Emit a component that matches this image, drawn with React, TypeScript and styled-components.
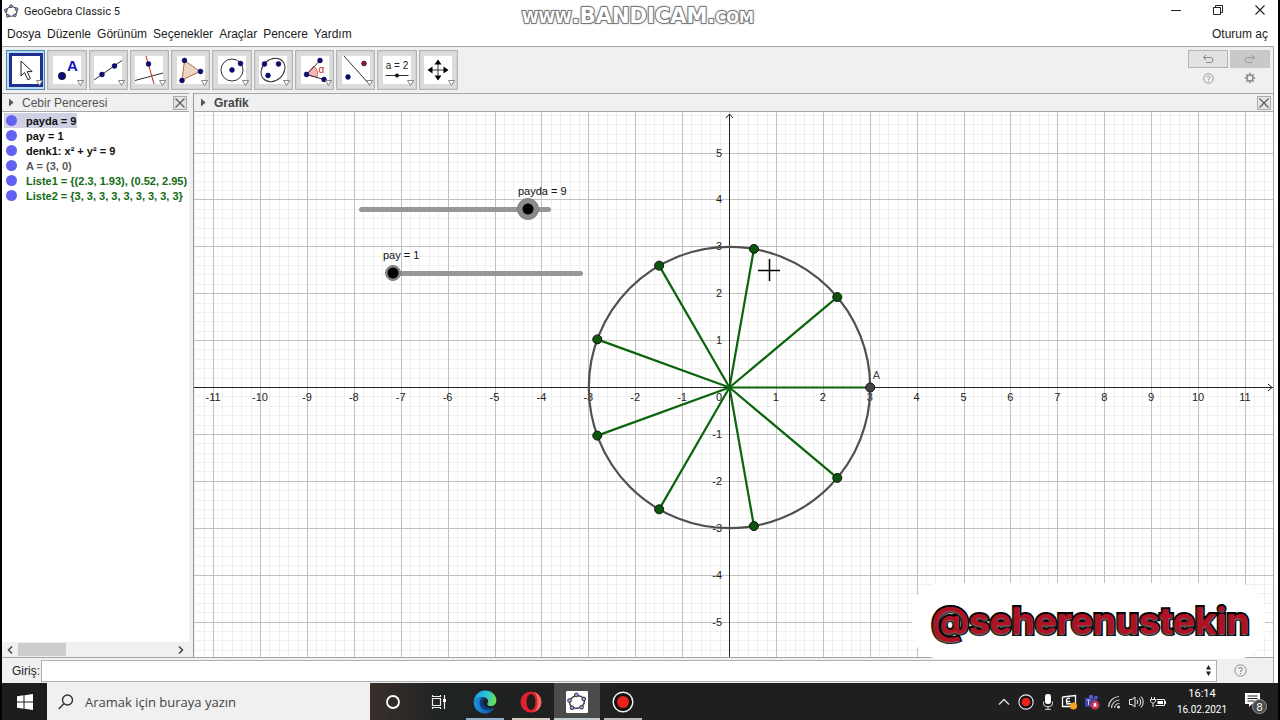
import React, { useEffect, useState } from "react";
import styled, { createGlobalStyle } from "styled-components";

const GlobalStyle = createGlobalStyle`
  *, *::before, *::after { box-sizing: border-box; }
  html, body { margin: 0; padding: 0; }
  body {
    background: #000;
    font-family: "Liberation Sans", Arial, sans-serif;
    font-size: 12px;
    color: #222;
  }
  button { font: inherit; color: inherit; padding: 0; cursor: default; }
`;

const Desktop = styled.div`
  display: flex;
  flex-direction: column;
  min-height: 100vh;
  border: solid #000;
  border-width: 0 2px;
  background: #fff;
`;

/* ---------- title and menu ---------- */

const TitleBar = styled.header`
  position: relative;
  display: flex;
  align-items: center;
  height: 22px;
  padding: 0 10px 0 2px;
  background: #fff;
`;

const AppTitle = styled.h1`
  flex: 1;
  margin: 0 0 0 5px;
  font: 400 11px Roboto, "Noto Sans", sans-serif;
  color: #222;
`;

const WindowControls = styled.div`
  display: flex;
  gap: 26px;
  padding-bottom: 3px;
`;

const PlainButton = styled.button`
  display: grid;
  place-items: center;
  border: 0;
  background: none;
`;

const WindowButton = styled(PlainButton)`
  width: 16px;
  height: 16px;
`;

const Watermark = styled.div`
  position: absolute;
  left: 0;
  right: 4px;
  top: 4px;
  text-align: center;
  pointer-events: none;
  font: 700 21px/24px "DejaVu Sans", sans-serif;
  font-variant: small-caps;
  color: #fff;
  -webkit-text-stroke: 2px #808080;
  paint-order: stroke fill;
  text-shadow: 0 0 3px #666;
`;

const MenuBar = styled.nav`
  display: flex;
  align-items: center;
  gap: 6px;
  height: 24px;
  padding: 0 10px 0 5px;
`;

const MenuButton = styled.button<{ $end?: boolean }>`
  border: 0;
  background: none;
  margin-left: ${(p) => (p.$end ? "auto" : "0")};
`;

/* ---------- window body ---------- */

const WindowBody = styled.div`
  flex: 1;
  display: flex;
  flex-direction: column;
  margin-right: 4px;
  border: solid #a6a6a6;
  border-width: 1px 1px 0 0;
  background: #f0f0f0;
`;

const Toolbar = styled.div`
  display: flex;
  justify-content: space-between;
  height: 46px;
  padding: 3px 3px 0 4px;
`;

const ToolGroup = styled.div`
  display: grid;
  grid-template-columns: repeat(11, 1fr);
  gap: 2px;
  width: 452px;
  height: 40px;
`;

const ToolButton = styled.button<{ $active?: boolean }>`
  display: grid;
  place-items: center;
  border: 1px solid ${(p) => (p.$active ? "#4a86b8" : "#b4b4b4")};
  background: ${(p) => (p.$active ? "#b9dcf5" : "#dcdcdc")};
  box-shadow: inset 0 0 0 1px ${(p) => (p.$active ? "#b9dcf5" : "#d2d2d2")};
`;

const ToolFace = styled.svg<{ $active?: boolean }>`
  display: block;
  width: 34px;
  height: 34px;
  border: ${(p) => (p.$active ? "3px solid #1f2f8f" : "3px solid #dcdcdc")};
  background: #fff;
  overflow: visible;
`;

const Actions = styled.div`
  display: grid;
  grid-template-columns: 40px 40px;
  grid-template-rows: 18px 20px;
  column-gap: 2px;
`;

const HistoryButton = styled.button<{ $disabled?: boolean }>`
  display: grid;
  place-items: center;
  border: 1px solid ${(p) => (p.$disabled ? "#c8c8c8" : "#b4b4b4")};
  background: ${(p) => (p.$disabled ? "#c9c9c9" : "#e2e2e2")};
`;

const Views = styled.div`
  flex: 1;
  display: flex;
`;

const AlgebraPane = styled.section`
  display: flex;
  flex-direction: column;
  width: 187px;
`;

const GraphPane = styled.section`
  flex: 1;
  display: flex;
  flex-direction: column;
  margin-left: 4px;
  border-left: 1px solid #999;
  min-width: 0;
`;

const PaneHeader = styled.div`
  display: flex;
  align-items: center;
  gap: 8px;
  height: 19px;
  padding: 0 2px 0 6px;
  border: solid #a6a6a6;
  border-width: 1px 0;
`;

const PaneTitle = styled.h2<{ $bold?: boolean }>`
  flex: 1;
  margin: 0;
  font-size: 12px;
  font-weight: ${(p) => (p.$bold ? 700 : 400)};
  color: ${(p) => (p.$bold ? "#444" : "#555")};
`;

const CloseBox = styled.button`
  display: grid;
  place-items: center;
  width: 14px;
  height: 14px;
  border: 1px solid #aaa;
  background: #e4e4e4;
`;

const ObjectList = styled.ul`
  flex: 1;
  margin: 0;
  padding: 1px 0;
  list-style: none;
  background: #fff;
`;

const ObjectRow = styled.li`
  display: flex;
  height: 15px;
  padding-left: 2px;
`;

const ObjectLabel = styled.span<{ $color: string; $selected?: boolean }>`
  display: flex;
  align-items: center;
  gap: 9px;
  padding: 0 1px 0 2px;
  white-space: nowrap;
  font-size: 11px;
  font-weight: 700;
  color: ${(p) => p.$color};
  background: ${(p) => (p.$selected ? "#d0d0e4" : "transparent")};
`;

const Marble = styled.span`
  width: 11px;
  height: 11px;
  border-radius: 50%;
  background: #6262f2;
`;

const ScrollRow = styled.div`
  display: flex;
  align-items: center;
  height: 15px;
  background: #f0f0f0;
`;

const ScrollTrack = styled.div`
  flex: 1;
  height: 13px;
`;

const ScrollThumb = styled.div`
  width: 48px;
  height: 13px;
  background: #cdcdcd;
`;

const ScrollArrow = styled(PlainButton)`
  width: 16px;
  height: 15px;
`;

/* ---------- drawing pad ---------- */

const Pad = styled.div`
  flex: 1;
  position: relative;
  background: #fff;
`;

const Plot = styled.svg`
  position: absolute;
  inset: 0;
  width: 100%;
  height: 100%;
  font-family: "Liberation Sans", Arial, sans-serif;
`;

const SliderBox = styled.div<{ $x: number; $y: number; $r: number }>`
  position: absolute;
  left: ${(p) => p.$x - p.$r}px;
  top: ${(p) => p.$y - 11}px;
  width: ${(p) => 188 + p.$r * 2}px;
  height: 22px;

  &::before {
    content: "";
    position: absolute;
    left: ${(p) => p.$r - 2}px;
    right: ${(p) => p.$r - 2}px;
    top: 9px;
    height: 5px;
    border-radius: 3px;
    background: #979797;
  }
`;

const SliderLabel = styled.label<{ $left: number; $top: number }>`
  position: absolute;
  left: ${(p) => p.$left}px;
  top: ${(p) => p.$top}px;
  font-size: 11px;
  line-height: 14px;
  white-space: nowrap;
  color: #111;
`;

const Range = styled.input<{ $r: number }>`
  position: relative;
  display: block;
  width: 100%;
  height: 22px;
  margin: 0;
  appearance: none;
  background: none;

  &::-webkit-slider-thumb {
    appearance: none;
    width: ${(p) => p.$r * 2}px;
    height: ${(p) => p.$r * 2}px;
    border: 1px solid #777;
    border-radius: 50%;
    background: radial-gradient(circle, #000 5px, #8c8c8c 6px);
  }
`;

const HandleTag = styled.div`
  position: absolute;
  right: 8px;
  bottom: -2px;
  width: 353px;
  padding: 18px 0 18px 4px;
  border-radius: 28px;
  background: #fff;
  text-align: center;
  font: 700 37px/40px Inter, "Open Sans", sans-serif;
  color: #b01224;
  -webkit-text-stroke: 4px #000;
  paint-order: stroke fill;
  text-shadow: 0 1px 2px #888;
`;

/* ---------- input bar ---------- */

const InputBar = styled.form`
  display: flex;
  align-items: center;
  height: 26px;
  padding: 1px 26px 1px 10px;
  border-top: 1px solid #a6a6a6;
  background: #f0f0f0;
`;

const InputLabel = styled.label`
  width: 29px;
`;

const InputFrame = styled.div`
  flex: 1;
  display: flex;
  align-items: center;
  height: 22px;
  margin-right: 17px;
  padding-right: 4px;
  border: 1px solid #b0b0b0;
  background: #fff;
`;

const CommandInput = styled.input`
  flex: 1;
  min-width: 0;
  height: 18px;
  border: 0;
  outline: 0;
  background: none;
  font: 12px "Liberation Sans", Arial, sans-serif;
`;

/* ---------- taskbar ---------- */

const Taskbar = styled.footer`
  display: flex;
  height: 37px;
  background: linear-gradient(90deg, #1b1e1d 366px, #3a302c 367px, #1f2322 440px, #1f1f1f 640px);
  color: #fff;
`;

const StartButton = styled(PlainButton)`
  width: 45px;
`;

const SearchBox = styled.label`
  display: flex;
  align-items: center;
  gap: 9px;
  width: 323px;
  padding-left: 11px;
  background: #f0f0f0;
`;

const SearchInput = styled.input`
  flex: 1;
  min-width: 0;
  border: 0;
  outline: 0;
  background: none;
  font: 13px "Open Sans", "Noto Sans", sans-serif;
  &::placeholder { color: #444; opacity: 1; }
`;

const TaskButton = styled.button<{ $line?: string; $active?: boolean }>`
  display: grid;
  place-items: center;
  width: 46px;
  border: 0;
  background-color: ${(p) => (p.$active ? "#4b4b4b" : "transparent")};
  background-image: ${(p) => (p.$line ? `linear-gradient(${p.$line}, ${p.$line})` : "none")};
  background-repeat: no-repeat;
  background-position: center bottom;
  background-size: ${(p) => (p.$active ? "46px" : "38px")} 2px;
`;

const Tray = styled.div`
  display: flex;
  align-items: center;
  margin-left: auto;
`;

const TrayButton = styled(PlainButton)`
  width: 22px;
  height: 36px;
`;

const Clock = styled.time`
  width: 64px;
  margin-left: 1px;
  text-align: center;
  font: 10px/16px Roboto, sans-serif;
  span { display: block; }
  span:first-child { font-size: 11px; }
`;

const NoticeButton = styled(PlainButton)`
  width: 44px;
  height: 36px;
`;

/* ---------- icons ---------- */

const Corner = () => (
  <path d="M24.500 24.500h6l-3 5z" fill="#fff" stroke="#777" strokeWidth="0.9" />
);

const Dot = ({ x, y, c = "#0b0b7a" }: { x: number; y: number; c?: string }) => (
  <circle cx={x} cy={y} r="2.4" fill={c} stroke="#000040" strokeWidth="0.6" />
);

const tools: { name: string; art: React.ReactNode }[] = [
  {
    name: "Taşı",
    art: <path d="M9 5v15l3.6-3.400 3.200 7.200 2.600-1.200-3.200-7h5z" fill="#fff" stroke="#222" />,
  },
  {
    name: "Nokta",
    art: (
      <>
        <circle cx="9" cy="20" r="3.7" fill="#0b0b7a" stroke="#000" strokeWidth="0.6" />
        <text x="14" y="15" fontSize="15" fontWeight="700" fill="#1414b8" fontFamily="Liberation Sans">A</text>
      </>
    ),
  },
  {
    name: "Doğru",
    art: (
      <>
        <path d="M0 24L28 4.500" stroke="#333" />
        <Dot x={8} y={18.500} />
        <Dot x={20.500} y={10} />
      </>
    ),
  },
  {
    name: "Dik doğru",
    art: (
      <>
        <path d="M0 24.500L28 17" stroke="#333" />
        <path d="M11 0l8 28" stroke="#cc2222" />
        <Dot x={13.500} y={8} />
      </>
    ),
  },
  {
    name: "Çokgen",
    art: (
      <>
        <path d="M7.500 4.500L23 15.500 5 24z" fill="#edd5c5" stroke="#b06a4a" />
        <Dot x={7.500} y={4.500} />
        <Dot x={23.500} y={15.500} />
        <Dot x={5} y={24.500} />
      </>
    ),
  },
  {
    name: "Çember",
    art: (
      <>
        <circle cx="14" cy="14" r="11" fill="none" stroke="#333" />
        <Dot x={14} y={14} />
        <Dot x={22.500} y={7.500} />
      </>
    ),
  },
  {
    name: "Elips",
    art: (
      <>
        <ellipse cx="14" cy="14" rx="13" ry="10.500" transform="rotate(-42 14 14)" fill="none" stroke="#333" />
        <Dot x={5.500} y={8} />
        <Dot x={19.500} y={8} />
        <Dot x={9} y={19.500} />
      </>
    ),
  },
  {
    name: "Açı",
    art: (
      <>
        <path d="M5.500 18.500L13 10a11 11 0 0 1 3 11.500z" fill="#f5b5b0" stroke="#cc4444" strokeWidth="0.7" />
        <path d="M19 4.500L5.500 18.500 23 23.500" fill="none" stroke="#333" />
        <text x="17.500" y="17" fontSize="10" fill="#cc2222" fontFamily="Liberation Sans">α</text>
        <Dot x={19} y={4.500} />
        <Dot x={5.500} y={18.500} />
        <Dot x={23} y={23.500} />
      </>
    ),
  },
  {
    name: "Yansıt",
    art: (
      <>
        <path d="M2 0l25 28" stroke="#333" />
        <Dot x={22} y={7.500} c="#a01822" />
        <Dot x={6} y={21} />
      </>
    ),
  },
  {
    name: "Sürgü",
    art: (
      <>
        <text x="14" y="13" fontSize="10" textAnchor="middle" fill="#222" fontFamily="Liberation Sans">a = 2</text>
        <path d="M2.500 19.500h23" stroke="#333" />
        <circle cx="14" cy="19.500" r="2" fill="#111" />
      </>
    ),
  },
  {
    name: "Grafik penceresini taşı",
    art: (
      <>
        <path d="M14 7v14M7 14h14" stroke="#333" />
        <path d="M14 3.500l3.500 5h-7zM14 24.500l3.500-5h-7zM3.500 14l5-3.500v7zM24.500 14l-5-3.500v7z" fill="#000" />
      </>
    ),
  },
];

const GeoMark = ({ size }: { size: number }) => (
  <svg width={size} height={size} viewBox="0 0 16 16">
    <ellipse cx="8" cy="8" rx="6" ry="5" fill="none" stroke="#444" strokeWidth="1.200" transform="rotate(-15 8 8)" />
    {[[7.5, 2.3], [13.4, 5.6], [11.6, 12.2], [4, 12.6], [2, 6.8]].map(([x, y]) => (
      <circle key={x} cx={x} cy={y} r="1.5" fill="#9c9cf0" stroke="#333" strokeWidth="0.8" />
    ))}
  </svg>
);

const Cross = ({ size, color = "#222" }: { size: number; color?: string }) => (
  <svg width={size} height={size} viewBox="0 0 10 10">
    <path d="M0.500 0.500l9 9M9.500 0.500l-9 9" stroke={color} strokeWidth="1.100" />
  </svg>
);

const Disclosure = () => (
  <svg width="6" height="9" viewBox="0 0 6 9">
    <path d="M1 0.500l4.500 4-4.500 4z" fill="#555" />
  </svg>
);

const HelpIcon = ({ size }: { size: number }) => (
  <svg width={size} height={size} viewBox="0 0 12 12">
    <circle cx="6" cy="6" r="5.200" fill="none" stroke="#888" strokeWidth="0.9" />
    <path d="M4.400 4.700a1.600 1.500 0 1 1 2.500 1.300c-.7.500-.9.700-.9 1.400M6 8.300v1" fill="none" stroke="#888" />
  </svg>
);

const GearIcon = () => (
  <svg width="12" height="12" viewBox="0 0 12 12">
    <circle cx="6" cy="6" r="3" fill="none" stroke="#888" strokeWidth="1.400" />
    {[0, 45, 90, 135, 180, 225, 270, 315].map((a) => (
      <path key={a} d="M6 2.500V.8" stroke="#888" strokeWidth="1.600" transform={`rotate(${a} 6 6)`} />
    ))}
  </svg>
);

const RecordIcon = ({ size }: { size: number }) => (
  <svg width={size} height={size} viewBox="0 0 22 22">
    <circle cx="11" cy="11" r="9.800" fill="#111" stroke="#eee" strokeWidth="1.500" />
    <circle cx="11" cy="11" r="6" fill="#e8231c" />
  </svg>
);

/* ---------- plot data ---------- */

const UNIT = 46.9;
const OX = 535;
const OY = 275;
const sx = (x: number) => OX + x * UNIT;
const sy = (y: number) => OY - y * UNIT;
const crisp = (v: number) => Math.round(v) + 0.5;

const span = (from: number, to: number) =>
  Array.from({ length: Math.max(0, to - from + 1) }, (_, i) => from + i);

const SLICES = 9;
const spokes = span(0, SLICES - 1).map((i) => {
  const t = (2 * Math.PI * i) / SLICES;
  return { x: sx(3 * Math.cos(t)) + 0.5, y: sy(3 * Math.sin(t)) + 0.5 };
});

const objects = [
  { text: "payda = 9", color: "#111", selected: true },
  { text: "pay = 1", color: "#111" },
  { text: "denk1: x² + y² = 9", color: "#111" },
  { text: "A = (3, 0)", color: "#5a5a5a" },
  { text: "Liste1 = {(2.3, 1.93), (0.52, 2.95)", color: "#136a13" },
  { text: "Liste2 = {3, 3, 3, 3, 3, 3, 3, 3, 3}", color: "#136a13" },
];

/* Last whole unit whose label fits right of and below the origin. */
const visibleUnits = () => ({
  right: Math.floor((window.innerWidth - 201 - OX - 10) / UNIT),
  down: Math.floor((window.innerHeight - 175 - OY - 8) / UNIT),
});

const Graph = () => {
  const [units, setUnits] = useState(visibleUnits);
  useEffect(() => {
    const update = () => setUnits(visibleUnits());
    window.addEventListener("resize", update);
    return () => window.removeEventListener("resize", update);
  }, []);
  const { right, down } = units;

  return (
    <Plot aria-label="Grafik">
      <g shapeRendering="crispEdges">
        {span(-57, right * 5 + 5).map((i) => (
          <line key={`mx${i}`} x1={crisp(sx(i / 5))} x2={crisp(sx(i / 5))} y1="0" y2="100%" stroke="#f0f0f0" />
        ))}
        {span(-down * 5 - 5, 29).map((i) => (
          <line key={`my${i}`} y1={crisp(sy(i / 5))} y2={crisp(sy(i / 5))} x1="0" x2="100%" stroke="#f0f0f0" />
        ))}
        {span(-11, right + 1).map((i) => (
          <line key={`x${i}`} x1={crisp(sx(i))} x2={crisp(sx(i))} y1="0" y2="100%" stroke="#c0c0c0" />
        ))}
        {span(-down - 1, 5).map((i) => (
          <line key={`y${i}`} y1={crisp(sy(i))} y2={crisp(sy(i))} x1="0" x2="100%" stroke="#c0c0c0" />
        ))}
        <line x1="0" x2="100%" y1={crisp(OY)} y2={crisp(OY)} stroke="#222" />
        <line y1="2" y2="100%" x1={crisp(OX)} x2={crisp(OX)} stroke="#222" />
      </g>
      <path d={`M${OX - 3} 6l3.500-4 3.500 4`} fill="none" stroke="#222" />
      <svg x="100%" y={OY} overflow="visible">
        <path d="M-5 -3l4 3.500-4 3.500" fill="none" stroke="#222" />
      </svg>
      <g fontSize="11" fill="#222">
        {span(-11, right).filter((i) => i !== 0).map((i) => (
          <text key={`lx${i}`} x={sx(i)} y={OY + 14} textAnchor="middle">{i}</text>
        ))}
        {span(-down, 5).filter((i) => i !== 0).map((i) => (
          <text key={`ly${i}`} x={OX - 7} y={sy(i) + 4} textAnchor="end">{i}</text>
        ))}
        <text x={OX - 7} y={OY + 14} textAnchor="end">0</text>
      </g>
      <circle cx={OX + 0.5} cy={OY + 0.5} r={3 * UNIT} fill="none" stroke="#505050" strokeWidth="2.200" />
      {spokes.map((p, i) => (
        <line key={i} x1={OX + 0.5} y1={OY + 0.5} x2={p.x} y2={p.y} stroke="#0b640b" strokeWidth="2.200" />
      ))}
      {spokes.map((p, i) => (
        <circle key={i} cx={p.x} cy={p.y} r="4.500" fill={i ? "#0b560b" : "#444"} stroke="#111" />
      ))}
      <text x={sx(3) + 3} y={OY - 8} fontSize="11" fill="#444">A</text>
      <path d="M564 158.500h22M575.500 147v22" stroke="#000" strokeWidth="1.500" />
    </Plot>
  );
};

export default function App() {
  return (
    <>
      <GlobalStyle />
      <Desktop>
        <TitleBar>
          <GeoMark size={15} />
          <AppTitle>GeoGebra Classic 5</AppTitle>
          <Watermark>www.BANDICAM.com</Watermark>
          <WindowControls>
            <WindowButton aria-label="Küçült">
              <svg width="16" height="16"><path d="M3 8.500h10" stroke="#222" /></svg>
            </WindowButton>
            <WindowButton aria-label="Geri yükle">
              <svg width="16" height="16">
                <path d="M3.500 5.500h7v7h-7zM5.500 5.500v-2h7v7h-2" fill="none" stroke="#222" />
              </svg>
            </WindowButton>
            <WindowButton aria-label="Kapat"><Cross size={10} /></WindowButton>
          </WindowControls>
        </TitleBar>
        <MenuBar>
          {["Dosya", "Düzenle", "Görünüm", "Seçenekler", "Araçlar", "Pencere", "Yardım"].map((m) => (
            <MenuButton key={m}>{m}</MenuButton>
          ))}
          <MenuButton $end>Oturum aç</MenuButton>
        </MenuBar>

        <WindowBody>
          <Toolbar>
            <ToolGroup>
              {tools.map((t, i) => (
                <ToolButton key={t.name} aria-label={t.name} $active={i === 0}>
                  <ToolFace viewBox="0 0 28 28" fill="none" $active={i === 0}>
                    {t.art}
                    <Corner />
                  </ToolFace>
                </ToolButton>
              ))}
            </ToolGroup>
            <Actions>
              <HistoryButton aria-label="Geri al">
                <svg width="12" height="10" fill="none" stroke="#888">
                  <path d="M1.500 3.500h7a2.500 2.500 0 0 1 0 5H4M4 1L1.500 3.500 4 6" />
                </svg>
              </HistoryButton>
              <HistoryButton aria-label="Yinele" $disabled>
                <svg width="12" height="10" fill="none" stroke="#999">
                  <path d="M10.500 3.500h-7a2.500 2.500 0 0 0 0 5H8M8 1l2.500 2.500L8 6" />
                </svg>
              </HistoryButton>
              <PlainButton aria-label="Yardım"><HelpIcon size={11} /></PlainButton>
              <PlainButton aria-label="Ayarlar"><GearIcon /></PlainButton>
            </Actions>
          </Toolbar>

          <Views>
            <AlgebraPane>
              <PaneHeader>
                <Disclosure />
                <PaneTitle>Cebir Penceresi</PaneTitle>
                <CloseBox aria-label="Cebir penceresini kapat"><Cross size={10} color="#555" /></CloseBox>
              </PaneHeader>
              <ObjectList>
                {objects.map((o) => (
                  <ObjectRow key={o.text}>
                    <ObjectLabel $color={o.color} $selected={o.selected}>
                      <Marble />
                      {o.text}
                    </ObjectLabel>
                  </ObjectRow>
                ))}
              </ObjectList>
              <ScrollRow>
                <ScrollArrow aria-label="Sola kaydır">
                  <svg width="6" height="8"><path d="M5 .5L1.500 4 5 7.500" fill="none" stroke="#444" strokeWidth="1.500" /></svg>
                </ScrollArrow>
                <ScrollTrack><ScrollThumb /></ScrollTrack>
                <ScrollArrow aria-label="Sağa kaydır">
                  <svg width="6" height="8"><path d="M1 .5L4.500 4 1 7.500" fill="none" stroke="#444" strokeWidth="1.500" /></svg>
                </ScrollArrow>
              </ScrollRow>
            </AlgebraPane>

            <GraphPane>
              <PaneHeader>
                <Disclosure />
                <PaneTitle $bold>Grafik</PaneTitle>
                <CloseBox aria-label="Grafiği kapat"><Cross size={10} color="#555" /></CloseBox>
              </PaneHeader>
              <Pad>
                <Graph />
                <SliderLabel htmlFor="payda" $left={324} $top={72}>payda = 9</SliderLabel>
                <SliderBox $x={167} $y={97} $r={11}>
                  <Range id="payda" type="range" min={1} max={10} defaultValue={9} $r={11} />
                </SliderBox>
                <SliderLabel htmlFor="pay" $left={189} $top={136}>pay = 1</SliderLabel>
                <SliderBox $x={199} $y={161} $r={8}>
                  <Range id="pay" type="range" min={1} max={10} defaultValue={1} $r={8} />
                </SliderBox>
                <HandleTag>@seherenustekin</HandleTag>
              </Pad>
            </GraphPane>
          </Views>

          <InputBar onSubmit={(e) => e.preventDefault()}>
            <InputLabel htmlFor="command">Giriş:</InputLabel>
            <InputFrame>
              <CommandInput id="command" />
              <PlainButton type="button" aria-label="Geçmiş">
                <svg width="7" height="12"><path d="M3.500 0L6 4.500H1zM3.500 11L6 6.500H1z" fill="#222" /></svg>
              </PlainButton>
            </InputFrame>
            <PlainButton type="button" aria-label="Giriş yardımı"><HelpIcon size={13} /></PlainButton>
          </InputBar>
        </WindowBody>

        <Taskbar>
          <StartButton aria-label="Başlat">
            <svg width="16" height="16" fill="#fff">
              <path d="M0 2.200L6.500 1.300v6.200H0zM7.500 1.200L16 0v7.500H7.500zM0 8.500h6.500v6.200L0 13.800zM7.500 8.500H16V16l-8.500-1.200z" />
            </svg>
          </StartButton>
          <SearchBox>
            <svg width="16" height="16" fill="none" stroke="#333" strokeWidth="1.400">
              <circle cx="9.500" cy="6" r="5" />
              <path d="M6 9.500L.8 15" />
            </svg>
            <SearchInput aria-label="Arama" placeholder="Aramak için buraya yazın" />
          </SearchBox>
          <TaskButton aria-label="Cortana">
            <svg width="16" height="16"><circle cx="8" cy="8" r="6" fill="none" stroke="#fff" strokeWidth="1.800" /></svg>
          </TaskButton>
          <TaskButton aria-label="Görev görünümü">
            <svg width="18" height="16" fill="none" stroke="#eee" strokeWidth="1.200">
              <path d="M2.500 4.500h8v7h-8zM2.500 1v1.500h8V1M2.500 15v-1.500h8V15M14.500 1v14" />
              <path d="M13 5h3v3h-3z" fill="#fff" stroke="none" />
            </svg>
          </TaskButton>
          <TaskButton aria-label="Edge" $line="#8fb0c6">
            <svg width="24" height="24" viewBox="0 0 24 24">
              <defs>
                <linearGradient id="edgeTop" x1="0" x2="1" y1="0.300" y2="0.500">
                  <stop offset="0" stopColor="#1c9be8" />
                  <stop offset="0.550" stopColor="#2cc3d6" />
                  <stop offset="1" stopColor="#6ae04a" />
                </linearGradient>
                <linearGradient id="edgeLow" x1="0" x2="1">
                  <stop offset="0" stopColor="#1f8fe0" />
                  <stop offset="1" stopColor="#0c4f9c" />
                </linearGradient>
              </defs>
              <path d="M.7 12A11.400 11.400 0 0 1 12 .6c7 0 11.400 5 11.400 9.800 0 3.600-2.600 5.600-5.400 5.600-2.700 0-3.700-1-3.700-1.800 0-.8.900-1.100.9-2.900 0-2-2-4-5-4C5.500 7.300 1.500 9 .7 12z" fill="url(#edgeTop)" />
              <path d="M.7 12c.8-3 4.500-4.700 9-4.700C7.500 8.700 6.800 11 6.800 13c0 4 3.500 7 7.500 7 3 0 5-1 7.200-2.300-2 3.700-5.700 5.800-9.500 5.800C5.500 23.500.5 18.500.7 12z" fill="url(#edgeLow)" />
              <path d="M9.700 7.300C7.500 8.700 6.800 11 6.800 13c0 4 3.500 7 7.500 7 3 0 5-1 7.200-2.300-5 1.300-11.500-.2-11.500-5.700 0-1.500.8-2.700 2-3.300z" fill="#0a3f86" />
            </svg>
          </TaskButton>
          <TaskButton aria-label="Opera" $line="#d8ccc4">
            <svg width="22" height="22" viewBox="0 0 22 22">
              <ellipse cx="11" cy="11" rx="10.500" ry="10.500" fill="#e0202c" />
              <path d="M13 .7a10.500 10.500 0 0 1 0 20.600c3-1 4.500-5 4.500-10.300S16 1.700 13 .7z" fill="#f26a62" />
              <ellipse cx="11" cy="11" rx="4.500" ry="8" fill="#201c1c" />
            </svg>
          </TaskButton>
          <TaskButton aria-label="GeoGebra" $line="#c4cdd2" $active>
            <svg width="22" height="22">
              <rect width="22" height="22" rx="1" fill="#fff" />
              <svg x="1" y="1" width="20" height="20"><GeoMark size={20} /></svg>
            </svg>
          </TaskButton>
          <TaskButton aria-label="Bandicam" $line="#b4babd"><RecordIcon size={22} /></TaskButton>

          <Tray>
            <TrayButton aria-label="Gizli simgeler">
              <svg width="12" height="8"><path d="M1 6.500l5-5 5 5" fill="none" stroke="#ddd" strokeWidth="1.300" /></svg>
            </TrayButton>
            <TrayButton aria-label="Kayıt"><RecordIcon size={16} /></TrayButton>
            <TrayButton aria-label="Mikrofon">
              <svg width="12" height="16">
                <rect x="3" y="0" width="6" height="10" rx="2.500" fill="#fff" />
                <path d="M1.500 7.500v2a3 3 0 0 0 3 3h3a3 3 0 0 0 3-3v-2M6 12.500V15M3 15.300h6" fill="none" stroke="#ddd" />
              </svg>
            </TrayButton>
            <TrayButton aria-label="Güncelleştirme">
              <svg width="18" height="16">
                <path d="M1.500 3l13-1.500v9M1.500 3v9.500h8M9 4.500a2.500 2.500 0 0 0-3.500 3l.5 2.500 4-.5M5 7.500h4" fill="none" stroke="#fff" strokeWidth="1.300" />
                <circle cx="12.500" cy="12" r="3.600" fill="#f5a01e" />
              </svg>
            </TrayButton>
            <TrayButton aria-label="Teams">
              <svg width="16" height="16">
                <circle cx="7" cy="3" r="2.200" fill="#5a60c8" />
                <circle cx="12" cy="3.500" r="1.800" fill="#5a60c8" />
                <rect x="1" y="4" width="12" height="9" rx="1" fill="#3c42a8" />
                <path d="M2.500 6h4M4.500 6v5" stroke="#c8caff" />
                <circle cx="11" cy="11" r="4.500" fill="#c8304e" />
                <path d="M9 12.500h4l-.7-1V10a1.300 1.300 0 0 0-2.600 0v1.500z" fill="#fff" />
              </svg>
            </TrayButton>
            <TrayButton aria-label="Ağ">
              <svg width="14" height="14" fill="none" stroke="#ccc" strokeWidth="1.200">
                <path d="M1.500 12A11 11 0 0 1 12 1.500M4.500 13A8 8 0 0 1 12.500 5M7.500 13A5 5 0 0 1 12.500 8.500" />
                <circle cx="11.500" cy="12" r="1" fill="#fff" />
              </svg>
            </TrayButton>
            <TrayButton aria-label="Ses">
              <svg width="17" height="14" fill="none" stroke="#eee">
                <path d="M1.500 4.500h2.500L7 2v10L4 9.500H1.500zM9 5a3 3 0 0 1 0 4M11 3a5.500 5.500 0 0 1 0 8M13 1.500a8 8 0 0 1 0 11" />
              </svg>
            </TrayButton>
            <TrayButton aria-label="Pil">
              <svg width="17" height="12" fill="none" stroke="#eee">
                <path d="M6.500 3.500h8v6h-9M15.500 5v3" />
                <path d="M7.500 5h5.500v3H7.500z" fill="#fff" stroke="none" />
                <path d="M1.500 1v2M4.500 1v2M.5 3.500h5v2l-2 1.500h-1l-2-1.500zM3 7v4" />
              </svg>
            </TrayButton>
            <Clock dateTime="2021-02-16T16:14">
              <span>16:14</span>
              <span>16.02.2021</span>
            </Clock>
            <NoticeButton aria-label="Bildirimler">
              <svg width="24" height="24">
                <path d="M1 3h15v11H8l-3 3v-3H1z" fill="#fff" />
                <path d="M3.500 6h10M3.500 8.500h10M3.500 11h7" stroke="#222" />
                <circle cx="15.500" cy="16.500" r="7" fill="#4a4a4a" stroke="#999" />
                <text x="15.500" y="20.500" fontSize="11" fill="#fff" textAnchor="middle" fontFamily="Liberation Sans">8</text>
              </svg>
            </NoticeButton>
          </Tray>
        </Taskbar>
      </Desktop>
    </>
  );
}
